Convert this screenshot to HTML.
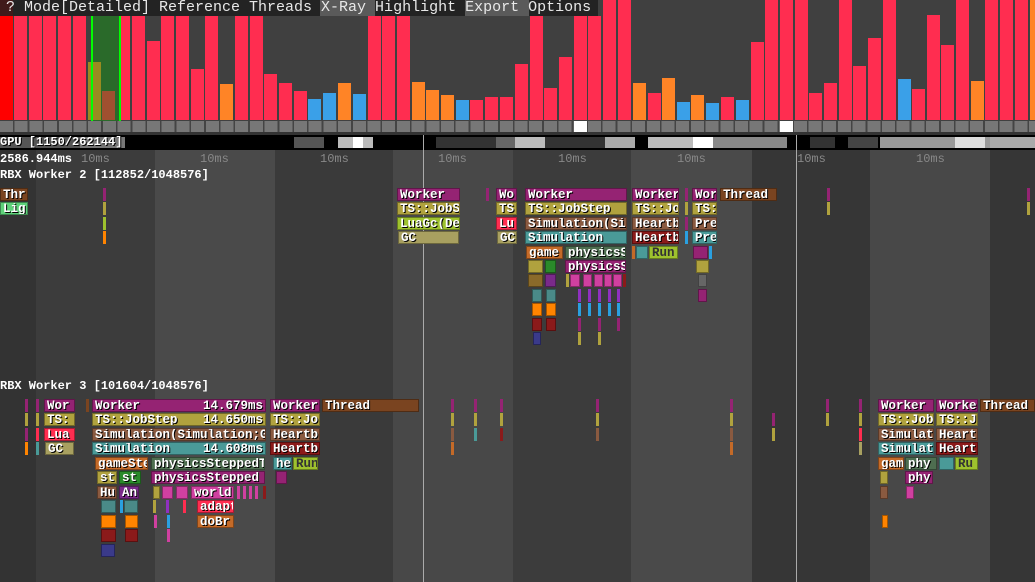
<!DOCTYPE html>
<html><head><meta charset="utf-8"><style>
*{margin:0;padding:0;box-sizing:border-box}
body{width:1035px;height:582px;overflow:hidden;background:#3c3c3c;position:relative;font-family:"Liberation Mono",monospace}
div{position:absolute}
.band{top:150px;height:432px}
.bar{bottom:462px;width:13px}
.r{background:#ff2d50}.o{background:#ff8426}.bl{background:#3aa0e8}
.b{height:13px;font:bold 12.5px/12px "Liberation Mono",monospace;color:#fff;padding-left:2px;overflow:hidden;white-space:nowrap;border:1px solid rgba(0,0,0,.35);text-shadow:1px 1px 0 #000}
.t{width:3px;height:13px}
.mg{background:#952373}.ol{background:#b0a23e}.li{background:#9ec22e}.gc{background:#a8a060}.rd{background:#ff2d50}
.br{background:#8a5a40}.te{background:#4a9a98}.dr{background:#8b1a1a}.th{background:#7a4420}.og{background:#c46a28}
.gg{background:#4e6e50}.pk{background:#d040a0}.gr{background:#2a8a2a}.pu{background:#7a2a8a}.or{background:#ff8400}
.nv{background:#3a3a8a}.tg{background:#4a8a88}.cy{background:#2aa0e0}.vi{background:#9030c0}
.lbl{font:bold 12px/14px "Liberation Mono",monospace;color:#fff}
.ms{font:12px/14px "Liberation Mono",monospace;color:#888;top:152px}
.ri{position:absolute;right:2px;top:0}
</style></head><body>
<div class="band" style="left:0;width:36px;background:#333"></div>
<div class="band" style="left:36px;width:119px;background:#3c3c3c"></div>
<div class="band" style="left:155px;width:120px;background:#4a4a4a"></div>
<div class="band" style="left:275px;width:118px;background:#3a3a3a"></div>
<div class="band" style="left:393px;width:120px;background:#484848"></div>
<div class="band" style="left:513px;width:118px;background:#3c3c3c"></div>
<div class="band" style="left:631px;width:121px;background:#4a4a4a"></div>
<div class="band" style="left:752px;width:118px;background:#363636"></div>
<div class="band" style="left:870px;width:120px;background:#484848"></div>
<div class="band" style="left:990px;width:45px;background:#363636"></div>
<div style="left:0;top:0;width:1035px;height:135px;background:#404040"></div>
<div class="bar" style="left:0;top:0;bottom:auto;height:120px;background:#f00"></div>
<div class="bar r" style="left:14px;top:16px;height:104px"></div>
<div class="bar r" style="left:29px;top:16px;height:104px"></div>
<div class="bar r" style="left:43px;top:16px;height:104px"></div>
<div class="bar r" style="left:58px;top:16px;height:104px"></div>
<div class="bar r" style="left:73px;top:16px;height:104px"></div>
<div style="left:91px;top:16px;width:28px;height:116px;background:#2a6a2a"></div>
<div style="left:88px;top:62px;width:13px;height:58px;background:#9a8a20"></div>
<div style="left:102px;top:91px;width:13px;height:29px;background:#a05030"></div>
<div style="left:91px;top:16px;width:2px;height:116px;background:#0f0"></div>
<div style="left:119px;top:16px;width:2px;height:116px;background:#0f0"></div>
<div class="bar r" style="left:121px;top:16px;height:104px;width:9px"></div>
<div class="bar r" style="left:132px;top:16px;height:104px"></div>
<div class="bar r" style="left:147px;top:41px;height:79px"></div>
<div class="bar r" style="left:161px;top:16px;height:104px"></div>
<div class="bar r" style="left:176px;top:16px;height:104px"></div>
<div class="bar r" style="left:191px;top:69px;height:51px"></div>
<div class="bar r" style="left:205px;top:16px;height:104px"></div>
<div class="bar o" style="left:220px;top:84px;height:36px"></div>
<div class="bar r" style="left:235px;top:16px;height:104px"></div>
<div class="bar r" style="left:250px;top:16px;height:104px"></div>
<div class="bar r" style="left:264px;top:74px;height:46px"></div>
<div class="bar r" style="left:279px;top:83px;height:37px"></div>
<div class="bar r" style="left:294px;top:91px;height:29px"></div>
<div class="bar bl" style="left:308px;top:99px;height:21px"></div>
<div class="bar bl" style="left:323px;top:93px;height:27px"></div>
<div class="bar o" style="left:338px;top:83px;height:37px"></div>
<div class="bar bl" style="left:353px;top:94px;height:26px"></div>
<div class="bar r" style="left:368px;top:16px;height:104px"></div>
<div class="bar r" style="left:382px;top:16px;height:104px"></div>
<div class="bar r" style="left:397px;top:16px;height:104px"></div>
<div class="bar o" style="left:412px;top:82px;height:38px"></div>
<div class="bar o" style="left:426px;top:90px;height:30px"></div>
<div class="bar o" style="left:441px;top:95px;height:25px"></div>
<div class="bar bl" style="left:456px;top:100px;height:20px"></div>
<div class="bar r" style="left:470px;top:100px;height:20px"></div>
<div class="bar r" style="left:485px;top:97px;height:23px"></div>
<div class="bar r" style="left:500px;top:97px;height:23px"></div>
<div class="bar r" style="left:515px;top:64px;height:56px"></div>
<div class="bar r" style="left:530px;top:16px;height:104px"></div>
<div class="bar r" style="left:544px;top:88px;height:32px"></div>
<div class="bar r" style="left:559px;top:57px;height:63px"></div>
<div class="bar r" style="left:574px;top:16px;height:104px"></div>
<div class="bar r" style="left:588px;top:16px;height:104px"></div>
<div class="bar r" style="left:603px;top:0;height:120px"></div>
<div class="bar r" style="left:618px;top:0;height:120px"></div>
<div class="bar o" style="left:633px;top:83px;height:37px"></div>
<div class="bar r" style="left:648px;top:93px;height:27px"></div>
<div class="bar o" style="left:662px;top:78px;height:42px"></div>
<div class="bar bl" style="left:677px;top:102px;height:18px"></div>
<div class="bar o" style="left:691px;top:95px;height:25px"></div>
<div class="bar bl" style="left:706px;top:103px;height:17px"></div>
<div class="bar r" style="left:721px;top:97px;height:23px"></div>
<div class="bar bl" style="left:736px;top:100px;height:20px"></div>
<div class="bar r" style="left:751px;top:42px;height:78px"></div>
<div class="bar r" style="left:765px;top:0;height:120px"></div>
<div class="bar r" style="left:780px;top:0;height:120px"></div>
<div class="bar r" style="left:795px;top:0;height:120px"></div>
<div class="bar r" style="left:809px;top:93px;height:27px"></div>
<div class="bar r" style="left:824px;top:83px;height:37px"></div>
<div class="bar r" style="left:839px;top:0;height:120px"></div>
<div class="bar r" style="left:853px;top:66px;height:54px"></div>
<div class="bar r" style="left:868px;top:38px;height:82px"></div>
<div class="bar r" style="left:883px;top:0;height:120px"></div>
<div class="bar bl" style="left:898px;top:79px;height:41px"></div>
<div class="bar r" style="left:912px;top:89px;height:31px"></div>
<div class="bar r" style="left:927px;top:15px;height:105px"></div>
<div class="bar r" style="left:941px;top:45px;height:75px"></div>
<div class="bar r" style="left:956px;top:0;height:120px"></div>
<div class="bar o" style="left:971px;top:81px;height:39px"></div>
<div class="bar r" style="left:985px;top:0;height:120px"></div>
<div class="bar r" style="left:1000px;top:0;height:120px"></div>
<div class="bar r" style="left:1015px;top:0;height:120px"></div>
<div class="bar o" style="left:1030px;top:0;height:120px;width:5px"></div>
<div style="left:0;top:121px;width:1035px;height:11px;background:repeating-linear-gradient(90deg,#777 0 13px,#444 13px 14.7px)"></div>
<div style="left:574px;top:121px;width:13px;height:11px;background:#fff"></div>
<div style="left:780px;top:121px;width:13px;height:11px;background:#fff"></div>
<div style="left:0;top:132px;width:1035px;height:3px;background:#333"></div>
<div style="left:0;top:0;width:598px;height:16px;background:rgba(30,30,30,.85)"></div>
<div style="left:320px;top:0;width:55px;height:16px;background:#5a5a5a"></div>
<div style="left:465px;top:0;width:64px;height:16px;background:#5a5a5a"></div>
<div style="left:6px;top:-1px;font:15px/17px 'Liberation Mono',monospace;color:#e8e8e8;white-space:pre">? Mode[Detailed] Reference Threads X-Ray Highlight Export Options</div>
<div style="left:0;top:135px;width:1035px;height:15px;background:#000"></div>
<div style="left:0;top:137px;width:80px;height:11px;background:#555"></div>
<div style="left:80px;top:137px;width:45px;height:11px;background:#777"></div>
<div style="left:294px;top:137px;width:30px;height:11px;background:#555"></div>
<div style="left:338px;top:137px;width:35px;height:11px;background:#bbb"></div>
<div style="left:353px;top:137px;width:10px;height:11px;background:#fff"></div>
<div style="left:436px;top:137px;width:60px;height:11px;background:#333"></div>
<div style="left:496px;top:137px;width:20px;height:11px;background:#666"></div>
<div style="left:515px;top:137px;width:30px;height:11px;background:#bbb"></div>
<div style="left:545px;top:137px;width:60px;height:11px;background:#333"></div>
<div style="left:605px;top:137px;width:30px;height:11px;background:#aaa"></div>
<div style="left:648px;top:137px;width:50px;height:11px;background:#bbb"></div>
<div style="left:693px;top:137px;width:20px;height:11px;background:#fff"></div>
<div style="left:713px;top:137px;width:74px;height:11px;background:#888"></div>
<div style="left:810px;top:137px;width:25px;height:11px;background:#333"></div>
<div style="left:848px;top:137px;width:30px;height:11px;background:#444"></div>
<div style="left:880px;top:137px;width:110px;height:11px;background:#999"></div>
<div style="left:955px;top:137px;width:30px;height:11px;background:#ddd"></div>
<div style="left:990px;top:137px;width:45px;height:11px;background:#aaa"></div>
<div class="lbl" style="left:0;top:135px;text-shadow:1px 1px 0 #000">GPU [1150/262144]</div>
<div style="left:423px;top:135px;width:1px;height:447px;background:#aaa"></div>
<div style="left:796px;top:135px;width:1px;height:447px;background:#aaa"></div>
<div class="lbl" style="left:0;top:152px">2586.944ms</div>
<div class="ms" style="left:81px">10ms</div><div class="ms" style="left:200px">10ms</div>
<div class="ms" style="left:320px">10ms</div><div class="ms" style="left:438px">10ms</div>
<div class="ms" style="left:558px">10ms</div><div class="ms" style="left:677px">10ms</div>
<div class="ms" style="left:797px">10ms</div><div class="ms" style="left:916px">10ms</div>
<div class="lbl" style="left:0;top:168px">RBX Worker 2 [112852/1048576]</div>
<div class="b th" style="left:0;top:188px;width:28px">Thr</div>
<div class="b" style="left:0;top:202px;width:28px;background:#5fd17a">Lig</div>
<div class="t mg" style="left:103px;top:188px"></div><div class="t ol" style="left:103px;top:202px"></div>
<div class="t li" style="left:103px;top:217px"></div><div class="t or" style="left:103px;top:231px"></div>
<div class="b mg" style="left:397px;top:188px;width:63px">Worker</div>
<div class="b ol" style="left:397px;top:202px;width:63px">TS::JobS</div>
<div class="b li" style="left:397px;top:217px;width:63px">LuaGc(De</div>
<div class="b gc" style="left:398px;top:231px;width:61px">GC</div>
<div class="t mg" style="left:486px;top:188px"></div>
<div class="b mg" style="left:496px;top:188px;width:21px">Wo</div>
<div class="b ol" style="left:496px;top:202px;width:21px">TS</div>
<div class="b rd" style="left:496px;top:217px;width:21px">Lu</div>
<div class="b gc" style="left:497px;top:231px;width:20px">GC</div>
<div class="b mg" style="left:525px;top:188px;width:102px">Worker</div>
<div class="b ol" style="left:525px;top:202px;width:102px">TS::JobStep</div>
<div class="b br" style="left:525px;top:217px;width:102px">Simulation(Si</div>
<div class="b te" style="left:525px;top:231px;width:102px">Simulation</div>
<div class="b og" style="left:526px;top:246px;width:37px">game</div>
<div class="b gg" style="left:565px;top:246px;width:61px">physicsS</div>
<div class="b mg" style="left:565px;top:260px;width:61px">physicsS</div>
<div class="b ol" style="left:528px;top:260px;width:15px"></div>
<div class="b gr" style="left:545px;top:260px;width:11px"></div>
<div class="b" style="left:528px;top:274px;width:15px;background:#8a6a2a"></div>
<div class="b pu" style="left:545px;top:274px;width:11px"></div>
<div class="t ol" style="left:566px;top:274px"></div>
<div class="b pk" style="left:570px;top:274px;width:10px"></div>
<div class="b pk" style="left:583px;top:274px;width:9px"></div>
<div class="b pk" style="left:594px;top:274px;width:9px"></div>
<div class="b pk" style="left:604px;top:274px;width:8px"></div>
<div class="b pk" style="left:613px;top:274px;width:9px"></div>
<div class="t dr" style="left:623px;top:274px"></div>
<div class="b tg" style="left:532px;top:289px;width:10px"></div><div class="b tg" style="left:546px;top:289px;width:10px"></div>
<div class="b or" style="left:532px;top:303px;width:10px"></div><div class="b or" style="left:546px;top:303px;width:10px"></div>
<div class="b dr" style="left:532px;top:318px;width:10px"></div><div class="b dr" style="left:546px;top:318px;width:10px"></div>
<div class="b nv" style="left:533px;top:332px;width:8px"></div>
<div class="t vi" style="left:578px;top:289px"></div><div class="t vi" style="left:588px;top:289px"></div><div class="t vi" style="left:598px;top:289px"></div><div class="t vi" style="left:608px;top:289px"></div><div class="t vi" style="left:617px;top:289px"></div>
<div class="t cy" style="left:578px;top:303px"></div><div class="t cy" style="left:588px;top:303px"></div><div class="t cy" style="left:598px;top:303px"></div><div class="t cy" style="left:608px;top:303px"></div><div class="t cy" style="left:617px;top:303px"></div>
<div class="t mg" style="left:578px;top:318px"></div><div class="t mg" style="left:598px;top:318px"></div><div class="t mg" style="left:617px;top:318px"></div>
<div class="t ol" style="left:578px;top:332px"></div><div class="t ol" style="left:598px;top:332px"></div>
<div class="b mg" style="left:632px;top:188px;width:47px">Worker</div>
<div class="b ol" style="left:632px;top:202px;width:47px">TS::Jo</div>
<div class="b br" style="left:632px;top:217px;width:47px">Heartb</div>
<div class="b dr" style="left:632px;top:231px;width:47px">Heartb</div>
<div class="t og" style="left:632px;top:246px"></div>
<div class="b te" style="left:636px;top:246px;width:12px"></div>
<div class="b li" style="left:649px;top:246px;width:29px;color:#333;text-shadow:none">Run</div>
<div class="t mg" style="left:685px;top:188px"></div><div class="t ol" style="left:685px;top:202px"></div>
<div class="t mg" style="left:685px;top:217px"></div><div class="t cy" style="left:685px;top:231px"></div>
<div class="b mg" style="left:692px;top:188px;width:25px">Wor</div>
<div class="b ol" style="left:692px;top:202px;width:25px">TS:</div>
<div class="b br" style="left:692px;top:217px;width:25px">Pre</div>
<div class="b te" style="left:692px;top:231px;width:25px">Pre</div>
<div class="b mg" style="left:693px;top:246px;width:15px"></div>
<div class="t cy" style="left:709px;top:246px"></div>
<div class="b ol" style="left:696px;top:260px;width:13px"></div>
<div class="b" style="left:698px;top:274px;width:9px;background:#666"></div>
<div class="b mg" style="left:698px;top:289px;width:9px"></div>
<div class="b th" style="left:720px;top:188px;width:57px">Thread</div>
<div class="t mg" style="left:827px;top:188px"></div>
<div class="t ol" style="left:827px;top:202px"></div>
<div class="t mg" style="left:1027px;top:188px"></div><div class="t ol" style="left:1027px;top:202px"></div>
<div class="lbl" style="left:0;top:379px">RBX Worker 3 [101604/1048576]</div>
<div class="t mg" style="left:25px;top:399px"></div><div class="t ol" style="left:25px;top:413px"></div>
<div class="t mg" style="left:25px;top:428px"></div><div class="t or" style="left:25px;top:442px"></div>
<div class="t mg" style="left:36px;top:399px"></div><div class="t ol" style="left:36px;top:413px"></div>
<div class="t rd" style="left:36px;top:428px"></div><div class="t te" style="left:36px;top:442px"></div>
<div class="b mg" style="left:44px;top:399px;width:31px">Wor</div>
<div class="b ol" style="left:44px;top:413px;width:31px">TS:</div>
<div class="b rd" style="left:44px;top:428px;width:31px">Lua</div>
<div class="b gc" style="left:45px;top:442px;width:29px">GC</div>
<div class="t th" style="left:86px;top:399px"></div>
<div class="b mg" style="left:92px;top:399px;width:174px">Worker<span class="ri">14.679ms</span></div>
<div class="b ol" style="left:92px;top:413px;width:174px">TS::JobStep<span class="ri">14.650ms</span></div>
<div class="b br" style="left:92px;top:428px;width:174px">Simulation(Simulation;G</div>
<div class="b te" style="left:92px;top:442px;width:174px">Simulation<span class="ri">14.608ms</span></div>
<div class="b og" style="left:95px;top:457px;width:53px">gameSte</div>
<div class="b gg" style="left:151px;top:457px;width:114px">physicsSteppedT</div>
<div class="b ol" style="left:97px;top:471px;width:20px">st</div>
<div class="b gr" style="left:119px;top:471px;width:22px">st</div>
<div class="b mg" style="left:151px;top:471px;width:114px">physicsStepped</div>
<div class="b br" style="left:97px;top:486px;width:20px">Hu</div>
<div class="b pu" style="left:119px;top:486px;width:20px">An</div>
<div class="b ol" style="left:153px;top:486px;width:7px"></div>
<div class="b pk" style="left:162px;top:486px;width:11px"></div>
<div class="b pk" style="left:176px;top:486px;width:12px"></div>
<div class="b pk" style="left:191px;top:486px;width:43px">world</div>
<div class="t pk" style="left:237px;top:486px"></div><div class="t pk" style="left:243px;top:486px"></div><div class="t pk" style="left:249px;top:486px"></div><div class="t pk" style="left:255px;top:486px"></div><div class="t dr" style="left:263px;top:486px"></div>
<div class="b tg" style="left:101px;top:500px;width:15px"></div>
<div class="t cy" style="left:120px;top:500px"></div>
<div class="b tg" style="left:124px;top:500px;width:14px"></div>
<div class="t ol" style="left:153px;top:500px"></div><div class="t vi" style="left:166px;top:500px"></div><div class="t rd" style="left:183px;top:500px"></div>
<div class="b rd" style="left:197px;top:500px;width:37px">adapt</div>
<div class="b or" style="left:101px;top:515px;width:15px"></div>
<div class="b or" style="left:125px;top:515px;width:13px"></div>
<div class="t pk" style="left:154px;top:515px"></div><div class="t cy" style="left:167px;top:515px"></div>
<div class="b og" style="left:197px;top:515px;width:37px">doBr</div>
<div class="b dr" style="left:101px;top:529px;width:15px"></div>
<div class="b dr" style="left:125px;top:529px;width:13px"></div>
<div class="t pk" style="left:167px;top:529px"></div>
<div class="b nv" style="left:101px;top:544px;width:14px"></div>
<div class="b mg" style="left:270px;top:399px;width:50px">Worker</div>
<div class="b ol" style="left:270px;top:413px;width:50px">TS::Jo</div>
<div class="b br" style="left:270px;top:428px;width:50px">Heartb</div>
<div class="b dr" style="left:270px;top:442px;width:50px">Heartb</div>
<div class="b te" style="left:273px;top:457px;width:19px">he</div>
<div class="b li" style="left:293px;top:457px;width:25px;color:#333;text-shadow:none">Run</div>
<div class="b mg" style="left:276px;top:471px;width:11px"></div>
<div class="b th" style="left:322px;top:399px;width:97px">Thread</div>
<div class="t mg" style="left:451px;top:399px"></div><div class="t ol" style="left:451px;top:413px"></div><div class="t br" style="left:451px;top:428px"></div><div class="t og" style="left:451px;top:442px"></div>
<div class="t mg" style="left:474px;top:399px"></div><div class="t ol" style="left:474px;top:413px"></div><div class="t te" style="left:474px;top:428px"></div>
<div class="t mg" style="left:500px;top:399px"></div><div class="t ol" style="left:500px;top:413px"></div><div class="t dr" style="left:500px;top:428px"></div>
<div class="t mg" style="left:596px;top:399px"></div><div class="t ol" style="left:596px;top:413px"></div><div class="t br" style="left:596px;top:428px"></div>
<div class="t mg" style="left:730px;top:399px"></div><div class="t ol" style="left:730px;top:413px"></div><div class="t br" style="left:730px;top:428px"></div><div class="t og" style="left:730px;top:442px"></div>
<div class="t mg" style="left:772px;top:413px"></div><div class="t ol" style="left:772px;top:428px"></div>
<div class="t mg" style="left:826px;top:399px"></div><div class="t ol" style="left:826px;top:413px"></div>
<div class="t mg" style="left:859px;top:399px"></div><div class="t ol" style="left:859px;top:413px"></div><div class="t rd" style="left:859px;top:428px"></div><div class="t gc" style="left:859px;top:442px"></div>
<div class="b mg" style="left:878px;top:399px;width:56px">Worker</div>
<div class="b ol" style="left:878px;top:413px;width:56px">TS::Job</div>
<div class="b br" style="left:878px;top:428px;width:56px">Simulat</div>
<div class="b te" style="left:878px;top:442px;width:56px">Simulat</div>
<div class="b og" style="left:878px;top:457px;width:26px">gam</div>
<div class="b gg" style="left:905px;top:457px;width:32px">phy</div>
<div class="b ol" style="left:880px;top:471px;width:8px"></div>
<div class="b mg" style="left:905px;top:471px;width:28px">phy</div>
<div class="b br" style="left:880px;top:486px;width:8px"></div>
<div class="b pk" style="left:906px;top:486px;width:8px"></div>
<div class="b or" style="left:882px;top:515px;width:6px"></div>
<div class="b mg" style="left:936px;top:399px;width:42px">Worke</div>
<div class="b ol" style="left:936px;top:413px;width:42px">TS::J</div>
<div class="b br" style="left:936px;top:428px;width:42px">Heart</div>
<div class="b dr" style="left:936px;top:442px;width:42px">Heart</div>
<div class="b te" style="left:939px;top:457px;width:15px"></div>
<div class="b li" style="left:955px;top:457px;width:23px;color:#333;text-shadow:none">Ru</div>
<div class="b th" style="left:980px;top:399px;width:55px">Thread</div>
</body></html>
